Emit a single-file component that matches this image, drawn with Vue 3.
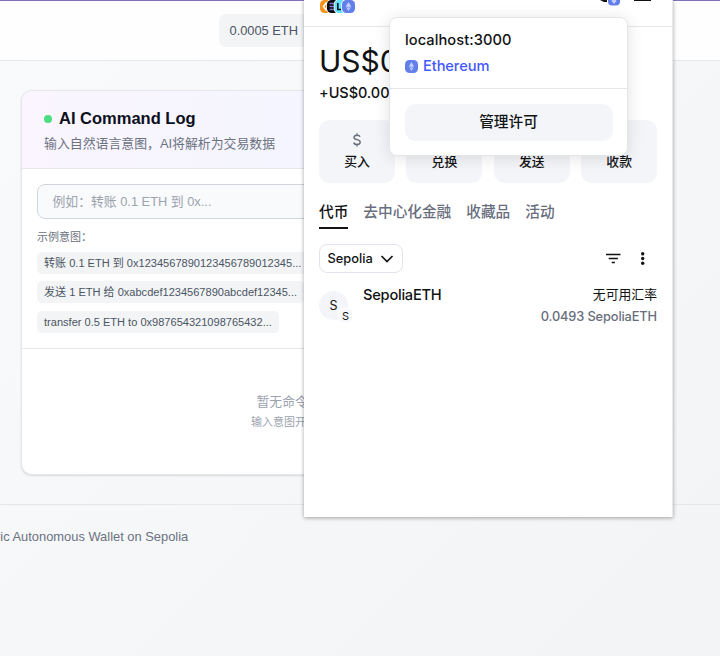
<script setup>
const intents = [
  '转账 0.1 ETH 到 0x1234567890123456789012345...',
  '发送 1 ETH 给 0xabcdef1234567890abcdef12345...',
  'transfer 0.5 ETH to 0x987654321098765432...',
]
const actions = ['买入', '兑换', '发送', '收款']
const tabs = ['代币', '去中心化金融', '收藏品', '活动']
</script>

<template>
  <div class="screen">
    <div class="page">
      <header class="topbar"><div class="balance">0.0005 ETH</div></header>
      <main class="content">
        <section class="card">
          <div class="card-head">
            <h2><i class="status"></i><span>AI Command Log</span></h2>
            <p>输入自然语言意图，AI将解析为交易数据</p>
          </div>
          <div class="form">
            <div class="field">例如：转账 0.1 ETH 到 0x...</div>
            <div class="hint">示例意图：</div>
            <div class="chips">
              <span v-for="t in intents" :key="t" class="chip">{{ t }}</span>
            </div>
          </div>
          <div class="empty">
            <p>暂无命令记录</p>
            <small>输入意图开始交易</small>
          </div>
        </section>
      </main>
      <footer>ric Autonomous Wallet on Sepolia</footer>
    </div>

    <aside class="wallet">
      <div class="wallet-top">
        <svg class="networks" width="37" height="15" viewBox="0 0 37 15">
          <rect x="0" y="0" width="13" height="13" rx="4.5" fill="#f7931a" />
          <path d="M6.500 2.500 3.500 6.500l3 4" stroke="#fff" stroke-width="1.600" fill="none" />
          <rect x="6.300" y="-.7" width="14.400" height="14.400" rx="5" fill="#fff" />
          <rect x="7" y="0" width="13" height="13" rx="4.5" fill="#090a12" />
          <path d="M9.500 3.500h5M9.500 6.500h4.500M9.500 9.500h5" stroke="#8272c4" stroke-width="1.400" />
          <rect x="13.800" y="-.7" width="14.400" height="14.400" rx="5" fill="#fff" />
          <rect x="14.500" y="0" width="13" height="13" rx="4.5" fill="#61dfff" />
          <path d="M17.800 3v6.500h3.200" stroke="#10131a" stroke-width="1.600" fill="none" />
          <rect x="21.300" y="-.7" width="14.400" height="14.400" rx="5" fill="#fff" />
          <rect x="22" y="0" width="13" height="13" rx="4.5" fill="#627eea" />
          <path d="m28.500 2 2.800 4.500-2.800 4.500-2.800-4.500z" fill="#c3cffa" />
          <path d="m25.500 6.300 3 1.700 3-1.700" stroke="#627eea" stroke-width=".7" fill="none" />
        </svg>
        <svg class="corner" width="56" height="8" viewBox="0 0 56 8">
          <path d="M0 0h7v2H4z" fill="#111" />
          <rect x="8" y="-7" width="12" height="12.500" rx="4" fill="#627eea" />
          <path d="m14-2 2.500 3L14 4l-2.500-3z" fill="#c3cffa" />
          <path d="M34 0h17v1H34z" fill="#111" />
        </svg>
      </div>
      <div class="wallet-body">
        <div class="total">US$0.00</div>
        <div class="delta">+US$0.00</div>
        <div class="actions">
          <div v-for="a in actions" :key="a" class="action">
            <svg width="12" height="16" viewBox="0 0 12 16">
              <path d="M9 4.800C8.700 3.700 7.600 3.200 6 3.200 4.200 3.200 3 4 3 5.400 3 8.500 9.200 6.600 9.200 10 9.200 11.600 7.900 12.500 6 12.500 4.200 12.500 3 11.800 2.700 10.500M6 1.200v2M6 12.500v2" fill="none" stroke="#686e7d" stroke-width="1.400" />
            </svg>
            <span>{{ a }}</span>
          </div>
        </div>
        <nav class="tabs">
          <span v-for="(t, i) in tabs" :key="t" :class="{ active: i === 0 }">{{ t }}</span>
        </nav>
        <div class="filters">
          <div class="network"><span>Sepolia</span>
            <svg width="14" height="10" viewBox="0 0 14 10"><path d="m1.500 2 5.500 5.500L12.500 2" fill="none" stroke="#121314" stroke-width="1.700" /></svg>
          </div>
          <svg class="tools" width="42" height="16" viewBox="0 0 42 16">
            <path d="M0 3.500h14.500M2.700 7.500h9.200M5.700 11.500h3.200" stroke="#121314" stroke-width="1.500" fill="none" />
            <g fill="#121314"><circle cx="36.700" cy="2.800" r="1.700" /><circle cx="36.700" cy="7.500" r="1.700" /><circle cx="36.700" cy="12.200" r="1.700" /></g>
          </svg>
        </div>
        <div class="token">
          <div class="avatar">S<span class="badge">S</span></div>
          <div class="token-name">SepoliaETH</div>
          <div class="amounts"><div class="rate">无可用汇率</div><div class="amount">0.0493 SepoliaETH</div></div>
        </div>
      </div>
      <div class="popover">
        <div class="site">
          <div class="host">localhost:3000</div>
          <div class="chain">
            <svg width="13" height="13" viewBox="0 0 13 13"><rect width="13" height="13" rx="4.5" fill="#627eea" /><path d="m6.500 2 2.600 4.500-2.600 4.500-2.600-4.500z" fill="#c3cffa" /><path d="m4 6.500 2.500 1.400L9 6.500" stroke="#627eea" stroke-width=".8" fill="none" /></svg>
            <span>Ethereum</span>
          </div>
        </div>
        <div class="manage"><button>管理许可</button></div>
      </div>
    </aside>
  </div>
</template>

<style>
body { margin: 0; overflow: hidden; }
</style>

<style scoped>
* { box-sizing: border-box; }
.screen { position: relative; width: 720px; height: 656px; overflow: hidden; font-family: "Liberation Sans", "Noto Sans CJK SC", sans-serif; }
.page { height: 656px; background: linear-gradient(135deg, #f9fafb, #f3f4f6); }
.topbar { height: 61px; border-top: 1px solid #8370bd; border-bottom: 1px solid #e5e7eb; background: #fefefe; padding: 13px 0 0 219px; }
.balance { width: 110px; height: 33px; border-radius: 7px; background: #f3f4f6; color: #4b5563; font-size: 12.83px; line-height: 34px; padding-left: 10.500px; white-space: nowrap; }
.content { height: 443px; padding: 29px 0 0 21px; }
.card { width: 548px; height: 385px; border: 1px solid #e5e7eb; border-radius: 11px; background: #fff; box-shadow: 0 1px 2px rgba(0,0,0,.12); overflow: hidden; }
.card-head { height: 78px; padding: 15px 22px 0; border-bottom: 1px solid #e5e7eb; background: linear-gradient(90deg, #faf5ff, #eff6ff); }
h2 { margin: 0; height: 24px; display: flex; align-items: center; gap: 7px; font-size: 16.5px; line-height: 24px; color: #0b1020; }
.status { width: 8px; height: 8px; margin-top: 1px; border-radius: 50%; background: #4ade80; }
.card-head p { margin: 4px 0 0; font-size: 12.88px; line-height: 20px; color: #6b7280; }
.form { height: 180px; padding: 15px; border-bottom: 1px solid #e5e7eb; }
.field { height: 35px; border: 1px solid #d1d5db; border-radius: 8px; background: #f9fafb; padding-left: 14.500px; font-size: 12.83px; line-height: 33px; color: #9ca3af; }
.hint { margin-top: 10px; height: 17px; line-height: 17px; font-size: 11px; color: #6b7280; }
.chips { margin-top: 6px; display: flex; flex-direction: column; align-items: flex-start; gap: 7.3px; }
.chip { height: 22px; border-radius: 5px; background: #f3f4f6; color: #4b5563; font-size: 11.05px; line-height: 22px; padding: 0 7px; white-space: nowrap; }
.empty { height: 126px; padding-top: 43px; text-align: center; color: #9ca3af; }
.empty p { margin: 0; font-size: 12.83px; line-height: 20px; }
.empty small { display: block; font-size: 11px; line-height: 20px; }
footer { border-top: 1px solid #e5e7eb; padding-top: 22px; font-size: 12.9px; line-height: 20px; color: #6b7280; text-indent: -4px; }
.wallet { position: absolute; left: 304px; top: 0; width: 369px; height: 517px; background: #fff; box-shadow: inset -1px 0 #e8e9eb, 0 1px 4px rgba(0,0,0,.36); font-family: Inter, "Noto Sans CJK SC", sans-serif; color: #121314; clip-path: inset(0 -8px -10px -8px); }
.wallet-top { height: 27px; border-bottom: 1px solid #e5e7eb; padding: 0 17px 0 16px; display: flex; justify-content: space-between; }
.wallet-body { padding: 15px 16px 0 15px; }
.total { height: 38px; line-height: 38px; font-size: 30px; white-space: nowrap; }
.delta { height: 22px; margin-top: 2px; line-height: 22px; font-size: 14.5px; font-weight: 500; letter-spacing: -.05px; }
.actions { margin-top: 16px; display: grid; grid-template-columns: repeat(4, 76px); gap: 11.4px; }
.action { height: 63px; border-radius: 11px; background: #f3f5f9; display: flex; flex-direction: column; align-items: center; padding-top: 12px; font-size: 12.83px; line-height: 20px; font-weight: 500; }
.action span { margin-top: 4px; }
.tabs { height: 46px; display: flex; gap: 15px; padding-top: 14px; font-size: 14.67px; line-height: 30px; font-weight: 500; color: #686e7d; }
.tabs span { height: 32px; }
.tabs .active { color: #121314; border-bottom: 2px solid #121314; }
.filters { margin-top: 15px; height: 29px; display: flex; justify-content: space-between; }
.network { width: 84px; height: 29px; border: 1px solid #e1e4eb; border-radius: 8px; display: flex; align-items: center; justify-content: space-between; padding: 0 8px 0 7.500px; font-size: 12.83px; font-weight: 500; }
.tools { margin: 7px 9px 0 0; }
.token { height: 60px; display: flex; padding-top: 11px; }
.avatar { position: relative; width: 29px; height: 29px; margin-top: 7px; border-radius: 50%; background: #f3f5f9; text-align: center; line-height: 29px; font-size: 12.500px; }
.badge { position: absolute; right: -5px; bottom: -3px; width: 15px; height: 15px; border-radius: 5px; background: #f7f8fb; border: 1px solid #fff; font-size: 11px; line-height: 14px; }
.token-name { margin-left: 15px; font-size: 14.67px; line-height: 22px; font-weight: 500; letter-spacing: -.25px; }
.amounts { margin-left: auto; text-align: right; font-size: 12.83px; }
.rate { line-height: 21px; }
.amount { line-height: 23px; color: #686e7d; font-weight: 500; letter-spacing: -.14px; }
.popover { position: absolute; left: 85px; top: 17px; width: 239px; height: 139px; background: #fff; border: 1px solid #e4e6e9; border-radius: 8px; box-shadow: 0 2px 16px rgba(0,0,0,.12); }
.site { height: 71px; border-bottom: 1px solid #e4e6e9; padding: 11px 15px 0; font-size: 14.67px; }
.host { line-height: 22px; font-weight: 500; letter-spacing: .06px; }
.chain { margin-top: 4px; display: flex; align-items: center; gap: 5px; line-height: 22px; color: #4459ff; font-weight: 500; letter-spacing: -.1px; }
.manage { padding: 15px 14.500px 0; }
button { width: 208px; height: 37px; border: 0; border-radius: 11px; padding: 0; background: #f3f5f9; color: #121314; font-family: inherit; font-size: 14.67px; line-height: 35px; font-weight: 500; }
</style>
